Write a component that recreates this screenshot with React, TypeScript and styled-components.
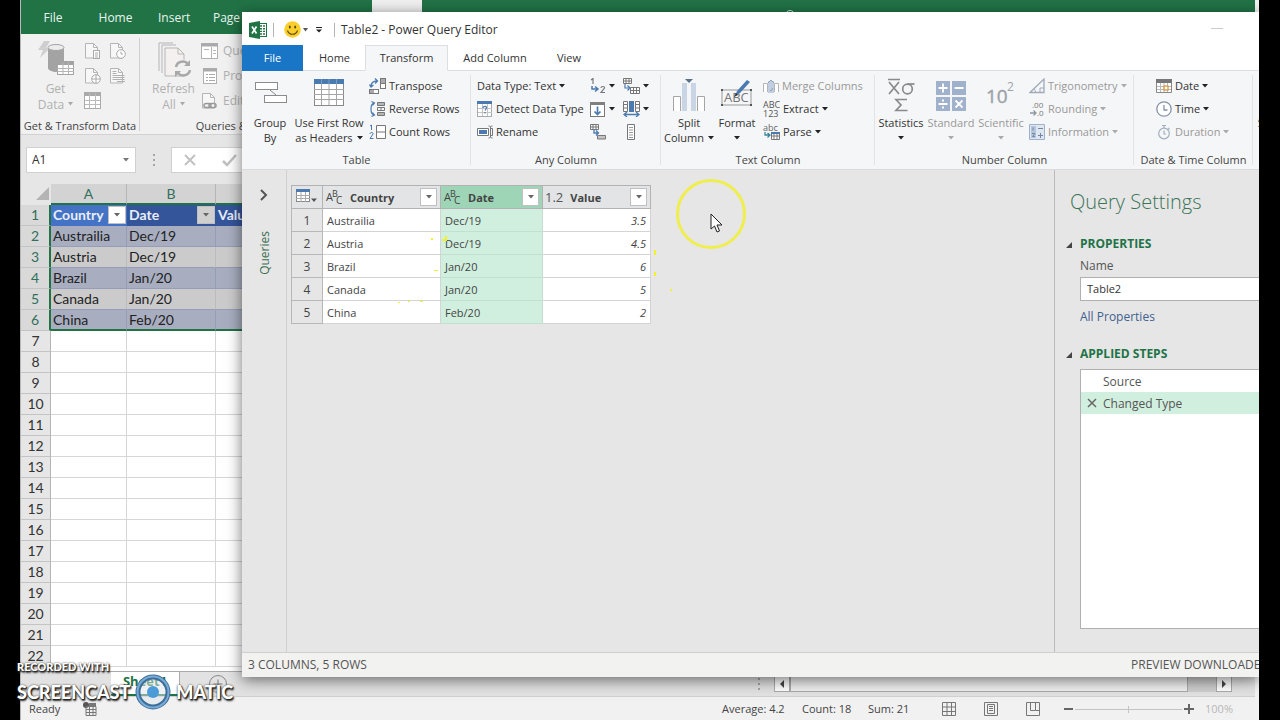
import React from "react";
import styled, { createGlobalStyle, css } from "styled-components";

const ui = `"Open Sans", "Noto Sans", sans-serif`;
const cellFont = `Lato, "Liberation Sans", sans-serif`;

const Global = createGlobalStyle`
  * { box-sizing: border-box; }
  body { margin: 0; background: #000; font-family: ${ui}; color: #333; overflow: hidden; }
  button, input { font-family: inherit; color: inherit; }
  button { background: none; border: 0; padding: 0; margin: 0; white-space: nowrap; }
  svg { display: block; flex: none; }
`;

const Screen = styled.div`
  position: relative;
  height: 100vh;
  min-height: 480px;
  padding: 0 21px 0 20px;
  overflow: hidden;
  background: #000;
`;
const Desktop = styled.div`
  position: relative;
  height: 100%;
  overflow: hidden;
`;

/* ---------- Spreadsheet window ---------- */
const Workbook = styled.div`
  height: 100%;
  display: flex;
  flex-direction: column;
  background: #e6e6e6;
  border-left: 1px solid #b8b8b8;
  border-right: 4px solid #f2f2f2;
`;
const BookTabs = styled.nav`
  flex: none;
  display: flex;
  height: 34px;
  padding-left: 12px;
  background: #217346;
`;
const BookTab = styled.button<{ $w: number; $active?: boolean }>`
  width: ${p => p.$w}px;
  font-size: 12px;
  color: ${p => (p.$active ? "#217346" : "#e9f5ee")};
  background: ${p => (p.$active ? "#f1f1f1" : "none")};
  margin-left: ${p => (p.$active ? 67 : 0)}px;
`;
const TellMe = styled.div`
  margin: 9px 0 0 362px;
`;
const BookRibbon = styled.div`
  flex: none;
  display: flex;
  height: 101px;
  background: #f1f1f1;
  border-bottom: 1px solid #d2d2d2;
`;
const BookGroup = styled.section<{ $w: number }>`
  width: ${p => p.$w}px;
  display: flex;
  flex-direction: column;
  margin: 4px 0 3px;
  border-right: 1px solid #cfcfcf;
`;
const BookGroupBody = styled.div`
  flex: 1;
  display: flex;
  color: #b0b0b0;
`;
const BookGroupLabel = styled.div`
  height: 10px;
  font-size: 11px;
  line-height: 10px;
  text-align: center;
  white-space: nowrap;
  color: #444;
`;
const BookLarge = styled.button<{ $w: number }>`
  width: ${p => p.$w}px;
  display: flex;
  flex-direction: column;
  align-items: center;
  padding: 3px 0 0 6px;
  font-size: 12px;
  line-height: 17px;
  color: #b0b0b0;
  svg { margin-bottom: 2px; }
`;
const BookIcons = styled.div`
  display: grid;
  grid-template-columns: 25px 25px;
  grid-auto-rows: 25px;
  align-items: center;
`;
const BookSmall = styled.button`
  display: flex;
  align-items: center;
  gap: 5px;
  height: 25px;
  font-size: 12px;
  color: #b0b0b0;
`;
const FormulaBar = styled.div`
  flex: none;
  display: flex;
  align-items: center;
  height: 49px;
  padding-left: 5px;
`;
const NameBox = styled.div`
  display: flex;
  align-items: center;
  width: 110px;
  height: 26px;
  background: #fff;
  border: 1px solid #d0d0d0;
  input { width: 96px; border: 0; padding: 0 5px; font-size: 12px; background: none; outline: 0; }
`;
const Dots = styled.div`
  display: flex;
  flex-direction: column;
  gap: 3px;
  width: 35px;
  align-items: center;
  i { width: 2px; height: 2px; background: #a6a6a6; }
`;
const FormulaBox = styled.div`
  flex: 1;
  display: flex;
  align-items: center;
  gap: 24px;
  height: 26px;
  padding-left: 10px;
  background: #fff;
  border: 1px solid #d0d0d0;
`;
const SheetArea = styled.div`
  flex: 1;
  min-height: 0;
  overflow: hidden;
  background: #fff;
`;
const Sheet = styled.table`
  width: 100%;
  table-layout: fixed;
  border-collapse: separate;
  border-spacing: 0;
  font-family: ${cellFont};
  font-size: 14px;
`;
const ColHead = styled.th<{ $sel?: boolean }>`
  height: 21px;
  padding: 0;
  font-weight: 400;
  color: ${p => (p.$sel ? "#31705a" : "#444")};
  background: ${p => (p.$sel ? "#d3d3d3" : "#e6e6e6")};
  border-right: 1px solid #b5b5b5;
  border-bottom: 2px solid ${p => (p.$sel ? "#217346" : "#b5b5b5")};
`;
const Corner = styled.th`
  height: 21px;
  padding: 0 2px 2px 0;
  background: #e6e6e6;
  svg { margin-left: auto; }
`;
const RowHead = styled.th<{ $sel?: boolean }>`
  height: 21px;
  padding: 0;
  line-height: 18px;
  font-weight: 400;
  color: ${p => (p.$sel ? "#31705a" : "#333")};
  background: ${p => (p.$sel ? "#d9d9d9" : "#e6e6e6")};
  border-right: ${p => (p.$sel ? "2px solid #217346" : "1px solid #b5b5b5")};
  border-bottom: 1px solid #c4c4c4;
`;
const Cell = styled.td<{ $kind?: "head" | "band" | "plain" | "last" }>`
  height: 21px;
  padding: 0 0 0 2px;
  line-height: 20px;
  color: #222;
  white-space: nowrap;
  overflow: hidden;
  border-right: 1px solid #d6d6d6;
  border-bottom: 1px solid #d6d6d6;
  ${p => p.$kind === "head" && css`
    background: #35559b; color: #e8edf8; font-weight: 700; border-color: #35559b;
    &:nth-child(2) { background: #4472c4; border-color: #4472c4; }
  `}
  ${p => (p.$kind === "band" || p.$kind === "last") && css`background: #a8aec0; border-color: #959db8;`}
  ${p => p.$kind === "plain" && css`background: #cbcbcb; border-right-color: #bcbcbc; border-bottom-color: #959db8;`}
  ${p => p.$kind === "last" && css`border-bottom: 2px solid #217346; line-height: 19px;`}
`;
const HeadCell = styled.div`
  display: flex;
  justify-content: space-between;
  align-items: center;
`;
const BookFilter = styled.button<{ $on?: boolean }>`
  width: 18px;
  height: 18px;
  display: grid;
  place-items: center;
  background: ${p => (p.$on ? "#fff" : "#d0d0d0")};
  border: 1px solid #c0c0c0;
`;
const SheetBar = styled.div`
  flex: none;
  display: flex;
  height: 26px;
  background: #e2e2e2;
  border-top: 1px solid #ababab;
  border-bottom: 1px solid #d0d0d0;
`;
const SheetTab = styled.button`
  margin-left: 90px;
  width: 69px;
  padding-bottom: 4px;
  background: #fff;
  border-bottom: 2px solid #217346;
  border-right: 1px solid #ababab;
  font-size: 13px;
  line-height: 18px;
  font-weight: 700;
  color: #217346;
`;
const AddSheet = styled.button`
  margin: 2px auto 0 28px;
  align-self: flex-start;
`;
const ScrollBar = styled.div`
  display: flex;
  height: 20px;
  width: 458px;
  margin-right: 23px;
  background: #cfcfcf;
`;
const ScrollButton = styled.button`
  width: 16px;
  display: grid;
  place-items: end center;
  padding-bottom: 3px;
  background: #fff;
  border: 1px solid #ababab;
`;
const ScrollThumb = styled.div`
  width: 398px;
  margin-right: auto;
  background: #f0f0f0;
  border: 1px solid #ababab;
`;
const ScrollDots = styled(Dots)`
  width: 30px;
  padding-top: 6px;
`;
const BookStatus = styled.footer`
  flex: none;
  display: flex;
  align-items: center;
  height: 23px;
  padding: 0 22px 0 8px;
  background: #f1f1f1;
  font-size: 11px;
  color: #444;
`;
const StatusText = styled.span<{ $w?: number; $dim?: boolean }>`
  width: ${p => (p.$w ? p.$w + "px" : "auto")};
  color: ${p => (p.$dim ? "#b8b8b8" : "#444")};
  white-space: nowrap;
`;
const StatusRight = styled.div`
  display: flex;
  align-items: center;
  margin-left: auto;
`;
const Views = styled.div`
  display: flex;
  gap: 26px;
  margin-right: 23px;
`;
const Zoom = styled.div`
  display: flex;
  align-items: center;
  gap: 2px;
  margin-right: 11px;
`;

/* ---------- Query editor window ---------- */
const Editor = styled.div`
  position: absolute;
  left: 222px;
  right: 0;
  top: 12px;
  bottom: 43px;
  display: flex;
  flex-direction: column;
  background: #e6e6e6;
  box-shadow: 0 3px 14px rgba(0, 0, 0, 0.55);
  overflow: hidden;
`;
const TitleBar = styled.header`
  flex: none;
  display: flex;
  align-items: center;
  height: 33px;
  padding: 2px 36px 0 7px;
  background: #fff;
  font-size: 12px;
  color: #333;
`;
const TitleRule = styled.span<{ $l: number; $r: number }>`
  width: 1px;
  height: 14px;
  background: #b4b4b4;
  margin: 0 ${p => p.$r}px 0 ${p => p.$l}px;
`;
const TitleButton = styled.button`
  display: flex;
  align-items: center;
  gap: 2px;
  margin-right: 8px;
`;
const Minimize = styled.button`
  margin-left: auto;
  width: 12px;
  height: 3px;
  border-top: 1px solid #ccc;
`;
const Tabs = styled.nav`
  flex: none;
  display: flex;
  height: 26px;
  background: #fff;
  border-bottom: 1px solid #dcdfe2;
`;
const Tab = styled.button<{ $w: number; $state?: "file" | "active" }>`
  width: ${p => p.$w}px;
  height: 26px;
  padding-bottom: 2px;
  font-size: 11px;
  ${p => p.$state === "file" && css`background: #1975c6; color: #fff; margin-right: 1px;`}
  ${p => p.$state === "active" && css`
    background: #f5f6f7; border: 1px solid #dcdfe2; border-bottom-color: #f5f6f7;
  `}
`;
const Ribbon = styled.div`
  flex: none;
  display: flex;
  height: 99px;
  background: #f5f6f7;
  border-bottom: 1px solid #dadbdc;
  overflow: hidden;
`;
const Group = styled.section<{ $w: number }>`
  flex: none;
  width: ${p => p.$w}px;
  display: flex;
  flex-direction: column;
  padding-top: 3px;
  background: linear-gradient(#e2e3e4, #e2e3e4) right 4px / 1px 90px no-repeat;
`;
const GroupBody = styled.div<{ $pad: number }>`
  flex: 1;
  display: flex;
  padding-left: ${p => p.$pad}px;
`;
const GroupLabel = styled.div`
  height: 17px;
  font-size: 11px;
  line-height: 16px;
  text-align: center;
  white-space: nowrap;
  color: #444;
`;
const Large = styled.button<{ $w: number; $off?: boolean }>`
  flex: none;
  width: ${p => p.$w}px;
  display: flex;
  flex-direction: column;
  align-items: center;
  padding-top: 4px;
  font-size: 11px;
  line-height: 15px;
  color: ${p => (p.$off ? "#999" : "#333")};
`;
const LargeIcon = styled.span`
  height: 37px;
`;
const LargeLine = styled.span`
  display: flex;
  align-items: center;
  justify-content: center;
  gap: 4px;
  height: 15px;
`;
const Stack = styled.div<{ $w?: number; $l?: number }>`
  flex: none;
  width: ${p => (p.$w ? p.$w + "px" : "auto")};
  margin-left: ${p => p.$l || 0}px;
`;
const Small = styled.button<{ $off?: boolean }>`
  display: flex;
  align-items: center;
  gap: 3px;
  height: 23px;
  font-size: 11px;
  color: ${p => (p.$off ? "#999" : "#333")};
`;
const Body = styled.div`
  flex: 1;
  min-height: 0;
  display: flex;
`;
const QueriesPane = styled.aside`
  flex: none;
  display: flex;
  flex-direction: column;
  align-items: center;
  width: 45px;
  padding-top: 19px;
  border-right: 1px solid #d0d0d0;
`;
const QueriesLabel = styled.span`
  margin-top: 30px;
  writing-mode: vertical-rl;
  transform: rotate(180deg);
  font-size: 12px;
  color: #3b6e53;
`;
const Preview = styled.main`
  flex: 1;
  min-width: 0;
  padding: 15px 0 0 4px;
`;
const Data = styled.table`
  width: 359px;
  table-layout: fixed;
  border-collapse: collapse;
  background: #fff;
  font-size: 11px;
  color: #444;
`;
const DataHead = styled.th<{ $sel?: boolean }>`
  height: 23px;
  padding: 0 3px 0 2px;
  background: ${p => (p.$sel ? "#9fd5b7" : "#e3e4e5")};
  border: 1px solid #b2b2b2;
`;
const DataHeadRow = styled.div`
  display: flex;
  align-items: center;
  gap: 7px;
`;
const TypeButton = styled.button`
  font-size: 13px;
  line-height: 18px;
  color: #555;
`;
const DataFilter = styled.button`
  width: 17px;
  height: 18px;
  margin-left: auto;
  display: grid;
  place-items: center;
  background: #fff;
  border: 1px solid #c0c0c0;
`;
const DataIndex = styled.th`
  height: 23px;
  padding: 0;
  font-weight: 400;
  font-size: 12px;
  background: #e6e6e6;
  border: 1px solid #b8b8b8;
`;
const DataCell = styled.td<{ $sel?: boolean; $num?: boolean }>`
  height: 23px;
  padding: 0 4px;
  border: 1px solid ${p => (p.$sel ? "#c3dfcf" : "#d4d4d4")};
  background: ${p => (p.$sel ? "#d1efdf" : "#fff")};
  text-align: ${p => (p.$num ? "right" : "left")};
  font-style: ${p => (p.$num ? "italic" : "normal")};
`;
const Settings = styled.aside`
  flex: none;
  display: flex;
  flex-direction: column;
  width: 205px;
  padding: 18px 0 23px 15px;
  border-left: 1px solid #bcbcbc;
  overflow: hidden;
`;
const SettingsTitle = styled.h1`
  margin: 0 0 14px;
  font-size: 20px;
  line-height: 28px;
  font-weight: 300;
  color: #3c7558;
`;
const SettingsHead = styled.h2`
  display: flex;
  align-items: center;
  gap: 7px;
  margin: 0 0 0 -4px;
  font-size: 12px;
  line-height: 28px;
  font-weight: 700;
  color: #217346;
`;
const Section = styled.div`
  padding-left: 10px;
  font-size: 12px;
`;
const NameField = styled.label`
  display: block;
  line-height: 16px;
  color: #555;
  input {
    display: block;
    width: 100%;
    height: 24px;
    margin: 3px 0 0;
    padding: 0 6px 2px;
    border: 1px solid #b0b0b0;
    border-right: 0;
    background: #fff;
    font-size: 11px;
    color: #333;
  }
`;
const AllLink = styled.a`
  display: block;
  margin: 8px 0 15px;
  line-height: 16px;
  color: #41618f;
  text-decoration: none;
`;
const Steps = styled.ul`
  flex: 1;
  margin: 1px 0 0 10px;
  padding: 0;
  list-style: none;
  background: #fff;
  border: 1px solid #b0b0b0;
  border-right: 0;
`;
const Step = styled.li<{ $sel?: boolean }>`
  display: grid;
  grid-template-columns: 10px 1fr;
  gap: 6px;
  align-items: center;
  height: 22px;
  padding-left: 6px;
  font-size: 12px;
  color: #555;
  background: ${p => (p.$sel ? "#d1efdf" : "none")};
`;
const EditorStatus = styled.footer`
  flex: none;
  display: flex;
  justify-content: space-between;
  align-items: center;
  height: 25px;
  padding: 0 0 2px 6px;
  background: #f2f2f0;
  border-top: 1px solid #cfcfcf;
  font-size: 12px;
  color: #555;
`;
const Clipped = styled.span`
  width: 128px;
  overflow: hidden;
  white-space: nowrap;
`;

/* ---------- Overlays ---------- */
const Pointer = styled.div`
  position: absolute;
  left: 673px;
  top: 176px;
`;
const Specks = styled.div`
  position: absolute;
  left: 390px;
  top: 230px;
`;
const Watermark = styled.div`
  position: absolute;
  left: 17px;
  bottom: 9px;
  color: #fff;
  font-family: ${cellFont};
  font-weight: 900;
  text-shadow: 1px 1px 1px #222, 0 0 2px #333, 1px 2px 2px #333;
`;
const MarkTop = styled.div`
  font-size: 11px;
  line-height: 12px;
`;
const MarkRow = styled.div`
  display: flex;
  align-items: center;
  gap: 4px;
  font-size: 18px;
  line-height: 38px;
`;

/* ---------- Icons ---------- */
const Svg = ({ w = 16, h = 16, children }: { w?: number; h?: number; children: React.ReactNode }) => (
  <svg width={w} height={h} viewBox={`0 0 ${w} ${h}`} fill="none" aria-hidden="true">{children}</svg>
);
const Caret = ({ c = "#222", s = 6 }: { c?: string; s?: number }) => (
  <Svg w={s} h={4}><path d={`M0 0H${s}L${s / 2} 3.4Z`} fill={c} /></Svg>
);
const B = "#4a7ab0";
const G = "#777";

const GetDataIcon = () => (
  <Svg w={38} h={37}>
    <path d="M7 0h6l-4 7h4L3 17l3-8H1z" fill="#cfcfcf" />
    <path d="M11 7v20c0 2 4 4 9 4V24h7V7z" fill="#a3a3a3" />
    <ellipse cx="19" cy="6.500" rx="8" ry="3" fill="#ececec" stroke="#a3a3a3" />
    <rect x="20.500" y="20.500" width="16" height="13" fill="#fff" stroke="#a3a3a3" />
    <path d="M20 21h17v3H20z" fill="#a3a3a3" /><path d="M26 21v12M31.500 21v12M20 27.500h17M20 30.500h17" stroke="#b5b5b5" />
  </Svg>
);
const RefreshIcon = () => (
  <Svg w={34} h={37}>
    <path d="M2 30V2h14M5 32V4h14" stroke="#b5b5b5" />
    <path d="M8 7h13l6 6v22H8z" fill="#f5f0f0" stroke="#b5b5b5" /><path d="M21 7v6h6" stroke="#b5b5b5" />
    <circle cx="26" cy="27" r="8.500" fill="#f1f1f1" />
    <path d="M19 26c1-6 9-7 12-3M33 29c-1 6-9 7-12 3" stroke="#a8a8a8" strokeWidth="2.400" />
    <path d="M33 19v6h-6zM18 36v-6h6z" fill="#a8a8a8" />
  </Svg>
);
const PageIcon = ({ badge }: { badge: "doc" | "clock" | "globe" | "lines" | "link" }) => (
  <Svg w={17} h={17}>
    <path d="M1.500 16V1.500h8l4 4V16z" fill="#f7f7f7" stroke="#b5b5b5" /><path d="M9.500 1.500v4h4" stroke="#b5b5b5" />
    {badge === "doc" && <><rect x="9.500" y="8.500" width="6" height="8" fill="#fff" stroke="#aaa" /><path d="M11 11h3M11 13h3M11 15h3" stroke="#aaa" /></>}
    {badge === "clock" && <><circle cx="12" cy="12" r="4.300" fill="#fff" stroke="#aaa" /><path d="M12 9.500V12h2" stroke="#aaa" /></>}
    {badge === "globe" && <><circle cx="12" cy="12" r="4.300" fill="#fff" stroke="#aaa" /><path d="M12 8v8M8 12h8" stroke="#aaa" /></>}
    {badge === "lines" && <path d="M3.500 4.500h4M3.500 6.500h4M3.500 8.500h12M3.500 10.500h12M3.500 12.500h12M8 14.500h8" stroke="#b0b0b0" />}
    {badge === "link" && <><rect x="3" y="11.500" width="7" height="4" rx="2" fill="#f1f1f1" stroke="#999" strokeWidth="1.500" /><rect x="8" y="11.500" width="7" height="4" rx="2" stroke="#999" strokeWidth="1.500" /></>}
  </Svg>
);
const GrayTable = () => (
  <Svg w={17} h={17}><rect x=".5" y=".5" width="16" height="16" fill="#fff" stroke="#aaa" /><path d="M0 1h17v3H0z" fill="#aaa" /><path d="M5.500 1v15M11.500 1v15M1 8.500h15M1 12.500h15" stroke="#bbb" /></Svg>
);
const PaneIcon = ({ list }: { list?: boolean }) => (
  <Svg w={17} h={16}>
    <rect x={list ? 2.5 : 0.5} y=".5" width={list ? 13 : 16} height="15" fill="#fff" stroke="#b0b0b0" />
    <path d={list ? "M2 2h14" : "M0 2h17"} stroke="#aaa" strokeWidth="3" />
    {list ? <path d="M5 6.500h2M5 9.500h2M5 12.500h2M8 6.500h6M8 9.500h6M8 12.500h6" stroke="#aaa" /> : <path d="M10.500 4v11M12 7.500h3M12 10.500h3M3 6.500h5" stroke="#b5b5b5" />}
  </Svg>
);

const ExcelLogo = () => (
  <Svg w={18} h={18}>
    <rect x="9" y="2.500" width="8.500" height="13" fill="#fff" stroke="#217346" />
    <path d="M11 5h2M14 5h2M11 7.700h2M14 7.700h2M11 10.400h2M14 10.400h2M11 13h2M14 13h2" stroke="#217346" strokeWidth="1.400" />
    <path d="M0 2l11-2v18L0 16z" fill="#217346" /><path d="M3 5.500l4.500 7M7.500 5.500l-4.500 7" stroke="#fff" strokeWidth="1.700" />
  </Svg>
);
const Smiley = () => (
  <Svg w={17} h={17}>
    <circle cx="8.500" cy="8.500" r="8.300" fill="#fbcf2b" /><ellipse cx="5.800" cy="6" rx="1" ry="1.600" fill="#5b4a10" /><ellipse cx="11.200" cy="6" rx="1" ry="1.600" fill="#5b4a10" />
    <path d="M3.500 9.500c1.500 5 8.500 5 10 0" stroke="#5b4a10" strokeWidth="1.100" />
  </Svg>
);
const GroupByIcon = () => (
  <Svg w={33} h={28}>
    <path d="M16 12l6 5" stroke="#888" /><rect x="1.500" y="4.500" width="22" height="7" fill="#fff" stroke="#8c8c8c" /><rect x="10.500" y="17.500" width="22" height="7" fill="#fff" stroke="#8c8c8c" />
  </Svg>
);
const HeadersIcon = () => (
  <Svg w={30} h={29}>
    <rect x=".5" y="1.500" width="29" height="26" fill="#fff" stroke="#8a8a8a" /><path d="M0 1h30v5H0z" fill={B} />
    <path d="M7.500 6v21M15 6v21M22.500 6v21M0 11.500h30M0 16.500h30M0 21.500h30" stroke="#a5a5a5" />
    <path d="M7.500 1v5M15 1v5M22.500 1v5" stroke="#7a9cc4" />
  </Svg>
);
const TransposeIcon = () => (
  <Svg w={17}><rect x="11.500" y=".5" width="5" height="10" fill="#fff" stroke={G} /><path d="M12 1h4v4h-4z" fill="#aaa" /><path d="M11 5.500h5" stroke={G} /><rect x=".5" y="11.500" width="9" height="4" fill="#fff" stroke={G} /><path d="M1 12h4v3H1z" fill="#aaa" /><path d="M2 9c0-4 2-6 6-6M6 .5L8.500 3 6 5.500M.5 6.500L2 9l2.500-2" stroke={B} strokeWidth="1.300" /></Svg>
);
const ReverseIcon = () => (
  <Svg w={17}><path d="M8.500 1.500h7v3h-7zM8.500 11.500h7v3h-7z" fill="#b5b5b5" stroke={G} /><path d="M8.500 6.500h7v3h-7zM12 6v4" stroke={G} /><path d="M5 2C1 3 1 13 5 14M2.500.5L5.500 2 3.500 4.500M3.500 11.500l2 2.500-3 1.500" stroke={B} strokeWidth="1.200" /></Svg>
);
const CountIcon = () => (
  <Svg w={17}><path d="M7.500 1.500h9v13h-9zM7 8h9" fill="#fff" stroke={G} /><path d="M1 2l1.500-1v5M1 10c0-2 3.500-2 3 0L1 14.500h3.500" stroke={B} /></Svg>
);
const DetectIcon = () => (
  <Svg><rect x=".5" y=".5" width="14" height="15" fill="#fff" stroke="#aaa" /><path d="M0 0h15v3H0z" fill={B} /><path d="M5.500 3v12M10.500 3v12M1 7.500h14M1 11.500h14" stroke="#c3c3c3" /><path d="M6 7c0-2.500 4-2 3.500 0L8 9.500M8 11v1.500" stroke={B} strokeWidth="1.200" /></Svg>
);
const RenameIcon = () => (
  <Svg><path d="M.5 4.500h11v7H.5z" fill="#fff" stroke={G} /><path d="M2 6h8v4H2z" fill={B} /><path d="M13.500 3v10M11.500 2c1 0 2 .5 2 1 0-.500 1-1 2-1M11.500 14c1 0 2-.500 2-1 0 .5 1 1 2 1M13 4.500h2.500v7H13" stroke={G} /></Svg>
);
const ReplaceIcon = () => (
  <Svg><path d="M1 2l2-1.500V6M11 10c0-2 4-2 3.500 0L11 14.500h4" stroke={G} strokeWidth="1.200" /><path d="M2 8v3h5M5 8.500L8 11l-3 2.500" stroke={B} strokeWidth="1.500" /></Svg>
);
const FillIcon = () => (
  <Svg><rect x=".5" y="1.500" width="14" height="14" fill="#fff" stroke={G} /><path d="M0 1h15v3H0z" fill="#808080" /><path d="M7.500 5.500v8M4.500 10.500l3 3 3-3" stroke={B} strokeWidth="1.700" /></Svg>
);
const PivotIcon = () => (
  <Svg w={17}><path d="M.5.5h8v5h-8zM.5 3h8M3 .5v5M6 .5v5M7.500 9.500h9v6h-9zM7.500 12.500h9M10.500 9.500v6M13.500 9.500v6" fill="#fff" stroke={G} /><path d="M2 6v4h4M4.500 7.500L7 10l-2.500 2.500" stroke={B} strokeWidth="1.200" /></Svg>
);
const MoveIcon = () => (
  <Svg w={17}><path d="M.5.500h4v10h-4zM12.500.500h4v10h-4zM.5 3.500h4M.5 7h4M12.500 3.500h4M12.500 7h4" fill="#fff" stroke={G} /><path d="M6 0h5v11H6z" fill={B} /><path d="M1 13.500h15M4 11l-3 2.500L4 16M13 11l3 2.500-3 2.500" stroke={B} strokeWidth="1.300" /></Svg>
);
const UnpivotIcon = () => (
  <Svg><path d="M.5.5h8v5h-8zM.5 3h8M3 .5v5M6 .5v5" fill="#fff" stroke={G} /><path d="M7.500 11.500h8v3.500h-8z" fill="#c5c5c5" stroke={G} /><path d="M4 5v4h4M6 6.500L8.500 9 6 11.500" stroke={B} strokeWidth="1.300" /></Svg>
);
const ListIcon = () => (
  <Svg><path d="M4.500.5h7v15h-7z" fill="#fff" stroke={G} /><path d="M6 3.500h4M6 6h4M6 8.500h4M6 11h4M6 13.500h4" stroke="#999" /></Svg>
);
const SplitIcon = () => (
  <Svg w={34} h={34}><path d="M1.500 33V18.500h7V33M25.500 33V18.500h7V33" fill="#fff" stroke="#a5a5a5" /><path d="M10 5h5v28h-5zM19 5h5v28h-5z" fill="#c9d5e4" /><path d="M13 1h8l-4 4z" fill="#58718f" /></Svg>
);
const FormatIcon = () => (
  <Svg w={34} h={34}>
    <path d="M2 12h29v15H2z" stroke="#999" /><path d="M1 11h2v2H1zM30 11h2v2h-2zM1 26h2v2H1zM30 26h2v2h-2z" fill="#555" />
    <text x="4" y="24" fontFamily={ui} fontSize="13" fill="#777">ABC</text>
    <path d="M15 18l2-5L27 2l3 2-10 11z" fill={B} /><path d="M14 19l2-4 2 2z" fill="#333" />
  </Svg>
);
const MergeIcon = () => (
  <Svg><path d="M.5 14V5.500h4V14M11.500 14V5.500h4V14" fill="#fff" stroke="#b5b5b5" /><path d="M5 3h6v12H5z" fill="#c2cee0" /><path d="M5 5l3-3 3 3M7 12l1 1 2-3" stroke="#8da3c0" /></Svg>
);
const ExtractIcon = () => (
  <Svg w={17} h={20}>
    <g fontFamily={ui} fontSize="9" fill="#555"><text x="0" y="9">ABC</text><text x="0" y="18">123</text></g>
  </Svg>
);
const ParseIcon = () => (
  <Svg w={17} h={18}><text x="0" y="8" fontFamily={ui} fontSize="9" fill="#666">abc</text><path d="M2 9v3h4M4.500 10L7 12l-2.500 2.500" stroke="#39869a" strokeWidth="1.300" /><path d="M8.500 9.500h8v7h-8zM8.500 13h8M11 10v6M14 10v6" fill="#fff" stroke={G} /><path d="M8 9h9v2H8z" fill={B} /></Svg>
);
const StatsIcon = () => (
  <Svg w={30} h={34}><g stroke="#8a8a8a" strokeWidth="1.700"><path d="M2 1.500h12M3 4l10 12M13 4L3 16" /><circle cx="21.500" cy="11" r="4.800" /><path d="M21.500 6h7" /><path d="M21 21.500H10l5 5.500-5 5.500h11.500" /></g></Svg>
);
const StandardIcon = () => (
  <Svg w={32} h={34}><path d="M1 3h14v14H1zM17 3h14v14H17zM1 19h14v14H1zM17 19h14v14H17z" fill="#9fb1cb" /><path d="M8 5.500v9M3.500 10h9M19.500 10h9M3.500 26h9M20.500 22.500l7 7M27.500 22.500l-7 7" stroke="#fff" strokeWidth="1.800" /><path d="M7 21.500h2v2H7zM7 28.500h2v2H7z" fill="#fff" /></Svg>
);
const ScientificIcon = () => (
  <Svg w={30} h={34}><text x="0" y="25" fontFamily={ui} fontSize="19" fill="#9da2aa" stroke="#9da2aa" strokeWidth=".4">10</text><text x="21" y="13" fontFamily={ui} fontSize="12" fill="#9da2aa">2</text></Svg>
);
const TrigIcon = () => (
  <Svg><path d="M1 14.500L15 1v13.500z" stroke="#a0aab8" strokeWidth="1.300" /><path d="M11 14v-4h4M5 11c1 1 1.500 2 1.500 3" stroke="#a0aab8" /></Svg>
);
const RoundIcon = () => (
  <Svg><text x="3" y="7" fontFamily={ui} fontSize="8" fill="#777">.00</text><text x="8" y="15" fontFamily={ui} fontSize="8" fill="#777">.0</text><path d="M1 12h6M4.500 9.500L7 12l-2.500 2.500" stroke="#8e97a3" strokeWidth="1.300" /></Svg>
);
const InfoIcon = () => (
  <Svg><path d="M.5.500h15v15H.5z" fill="#dfe6ef" stroke="#9fb1cb" /><path d="M2 2h5v12H2z" fill="#b4c5dc" /><path d="M4 3.500v3M3 9.500h3L3.500 12.500H6M9 4.500h5M9 11.500h5M11.500 9v5" stroke="#7388a5" /></Svg>
);
const DateIcon = () => (
  <Svg><path d="M.5 1.500h15v13H.5z" fill="#fff" stroke="#888" /><path d="M0 1h16v4H0z" fill="#777" /><path d="M4.500 5v9M8 5v9M11.500 5v9M1 8.500h14M1 11.500h14" stroke="#bbb" /><rect x="8" y="8" width="4" height="4" fill="#fff" stroke="#d79a3f" strokeWidth="1.300" /></Svg>
);
const TimeIcon = () => (
  <Svg><circle cx="8" cy="8" r="7.200" fill="#fff" stroke="#8494a7" strokeWidth="1.300" /><path d="M8 4v5h3.500" stroke="#8494a7" strokeWidth="1.300" /></Svg>
);
const DurationIcon = () => (
  <Svg><circle cx="8" cy="9.500" r="5.300" stroke="#a5b0bf" strokeWidth="1.200" /><path d="M8 6.500V10h2M6 1.500h4M8 1.500v3M12 4l1.500 1.500" stroke="#a5b0bf" strokeWidth="1.200" /></Svg>
);
const TypeText = () => (
  <Svg w={18} h={16}><g fontFamily={ui} fill="#444"><text x="1" y="12" fontSize="11">A</text><text x="7" y="8" fontSize="9">B</text><text x="11" y="15" fontSize="10">C</text></g></Svg>
);
const TableMenu = () => (
  <Svg w={22} h={14}><rect x=".5" y=".5" width="13" height="12" fill="#fff" stroke="#888" /><path d="M0 0h14v3H0z" fill={B} /><path d="M5 3v10M9.500 3v10M0 6.500h14M0 9.500h14" stroke="#aaa" /><path d="M15 9.500h6l-3 3.500z" fill="#555" /></Svg>
);

/* ---------- Data ---------- */
const rows = [
  ["Austrailia", "Dec/19", "3.5"],
  ["Austria", "Dec/19", "4.5"],
  ["Brazil", "Jan/20", "6"],
  ["Canada", "Jan/20", "5"],
  ["China", "Feb/20", "2"],
];
const emptyRows = Array.from({ length: 16 }, (_, i) => i + 7);

type SmallProps = { icon?: React.ReactNode; text?: string; menu?: boolean; off?: boolean; label?: string };
const SmallButton = ({ icon, text, menu, off, label }: SmallProps) => (
  <Small $off={off} disabled={off} aria-label={text ? undefined : label}>
    {icon}
    {text && <span>{text}</span>}
    {menu && <Caret c={off ? "#aaa" : "#222"} />}
  </Small>
);
type LargeProps = { icon: React.ReactNode; w: number; a: string; b?: string; menu?: boolean; off?: boolean };
const LargeButton = ({ icon, w, a, b, menu, off }: LargeProps) => (
  <Large $w={w} $off={off} disabled={off}>
    <LargeIcon>{icon}</LargeIcon>
    <LargeLine>{a}</LargeLine>
    <LargeLine>{b}{menu && <Caret c={off ? "#aaa" : "#222"} />}</LargeLine>
  </Large>
);

const Spreadsheet = () => (
  <Workbook>
    <BookTabs>
      <BookTab $w={40}>File</BookTab>
      <BookTab $w={85}>Home</BookTab>
      <BookTab $w={31}>Insert</BookTab>
      <BookTab $w={116}>Page Layout</BookTab>
      <BookTab $w={50} $active aria-label="Data" />
      <TellMe><Svg w={12} h={14}><circle cx="6" cy="6" r="4.500" stroke="#cfe5d8" /><path d="M4 12h4" stroke="#cfe5d8" /></Svg></TellMe>
    </BookTabs>
    <BookRibbon>
      <BookGroup $w={119}>
        <BookGroupBody>
          <BookLarge $w={63} disabled><GetDataIcon /><span>Get</span><LargeLine>Data <Caret c="#aaa" s={5} /></LargeLine></BookLarge>
          <BookIcons>
            <PageIcon badge="doc" /><PageIcon badge="clock" />
            <PageIcon badge="globe" /><PageIcon badge="lines" />
            <GrayTable />
          </BookIcons>
        </BookGroupBody>
        <BookGroupLabel>Get &amp; Transform Data</BookGroupLabel>
      </BookGroup>
      <BookGroup $w={230}>
        <BookGroupBody>
          <BookLarge $w={61} disabled><RefreshIcon /><span>Refresh</span><LargeLine>All <Caret c="#aaa" s={5} /></LargeLine></BookLarge>
          <div>
            <BookSmall disabled><PaneIcon />Queries</BookSmall>
            <BookSmall disabled><PaneIcon list />Properties</BookSmall>
            <BookSmall disabled><PageIcon badge="link" />Edit Links</BookSmall>
          </div>
        </BookGroupBody>
        <BookGroupLabel>Queries &amp; Connections</BookGroupLabel>
      </BookGroup>
    </BookRibbon>
    <FormulaBar>
      <NameBox><input aria-label="Name box" defaultValue="A1" /><Caret c="#777" /></NameBox>
      <Dots><i /><i /><i /></Dots>
      <FormulaBox>
        <Svg><path d="M3 3l10 10M13 3L3 13" stroke="#c0c0c0" strokeWidth="1.800" /></Svg>
        <Svg><path d="M1 9l4 4L14 3" stroke="#c0c0c0" strokeWidth="2.500" /></Svg>
      </FormulaBox>
    </FormulaBar>
    <SheetArea>
      <Sheet>
        <colgroup><col style={{ width: 30 }} /><col style={{ width: 76 }} /><col style={{ width: 89 }} /><col /></colgroup>
        <thead>
          <tr>
            <Corner><Svg w={13} h={13}><path d="M13 0v13H0z" fill="#b4b4b4" /></Svg></Corner>
            <ColHead $sel>A</ColHead><ColHead $sel>B</ColHead><ColHead $sel />
          </tr>
        </thead>
        <tbody>
          <tr>
            <RowHead $sel>1</RowHead>
            <Cell $kind="head"><HeadCell>Country<BookFilter $on aria-label="Filter Country"><Caret c="#666" /></BookFilter></HeadCell></Cell>
            <Cell $kind="head"><HeadCell>Date<BookFilter aria-label="Filter Date"><Caret c="#666" /></BookFilter></HeadCell></Cell>
            <Cell $kind="head">Value</Cell>
          </tr>
          {rows.map((r, i) => {
            const kind = i === 4 ? "last" : i % 2 ? "plain" : "band";
            return (
              <tr key={i}>
                <RowHead $sel>{i + 2}</RowHead>
                <Cell $kind={kind}>{r[0]}</Cell><Cell $kind={kind}>{r[1]}</Cell><Cell $kind={kind} />
              </tr>
            );
          })}
          {emptyRows.map(n => <tr key={n}><RowHead>{n}</RowHead><Cell /><Cell /><Cell /></tr>)}
        </tbody>
      </Sheet>
    </SheetArea>
    <SheetBar>
      <SheetTab>Sheet1</SheetTab>
      <AddSheet aria-label="New sheet"><Svg w={20} h={20}><circle cx="10" cy="10" r="8.500" stroke="#888" /><path d="M10 5.500v9M5.500 10h9" stroke="#777" /></Svg></AddSheet>
      <ScrollDots><i /><i /><i /></ScrollDots>
      <ScrollBar>
        <ScrollButton aria-label="Scroll left"><Svg w={6} h={8}><path d="M5 0v8L1 4z" fill="#444" /></Svg></ScrollButton>
        <ScrollThumb />
        <ScrollButton aria-label="Scroll right"><Svg w={6} h={8}><path d="M1 0v8l4-4z" fill="#444" /></Svg></ScrollButton>
      </ScrollBar>
    </SheetBar>
    <BookStatus>
      <StatusText $w={54}>Ready</StatusText>
      <Svg w={14} h={14}><circle cx="3" cy="3" r="3" fill="#555" /><path d="M3 4.500h10v9H3zM3 7.500h10M3 10.500h10M6.500 5v8M10 5v8" stroke="#777" /><path d="M6 1h7v3H6z" fill="#777" /></Svg>
      <StatusRight>
        <StatusText $w={80}>Average: 4.2</StatusText>
        <StatusText $w={66}>Count: 18</StatusText>
        <StatusText $w={73}>Sum: 21</StatusText>
        <Views>
          <Svg><path d="M1.500 1.500h13v13h-13zM1.500 6h13M1.500 10.500h13M6 1.500v13M10.500 1.500v13" stroke="#777" /></Svg>
          <Svg><path d="M1.500 1.500h13v13h-13zM4.500 3.500h7v9h-7zM6 5.500h4M6 7.500h4M6 9.500h4" stroke="#777" /></Svg>
          <Svg><path d="M1.500 1.500h13v13h-13zM5.500 1.500v8h5v-8M10.500 9.500h4" stroke="#777" /></Svg>
        </Views>
        <Zoom>
          <Svg w={9} h={10}><path d="M0 5h9" stroke="#666" strokeWidth="2" /></Svg>
          <Svg w={107} h={10}><path d="M0 5.500h107M53.500 2v7" stroke="#c4c4c4" /></Svg>
          <Svg w={10} h={10}><path d="M0 5h10M5 0v10" stroke="#666" strokeWidth="2" /></Svg>
        </Zoom>
        <StatusText $dim>100%</StatusText>
      </StatusRight>
    </BookStatus>
  </Workbook>
);

const EditorRibbon = () => (
  <Ribbon>
    <Group $w={229}>
      <GroupBody $pad={6}>
        <LargeButton w={44} icon={<GroupByIcon />} a="Group" b="By" />
        <LargeButton w={74} icon={<HeadersIcon />} a="Use First Row" b="as Headers" menu />
        <Stack $l={3}>
          <SmallButton icon={<TransposeIcon />} text="Transpose" />
          <SmallButton icon={<ReverseIcon />} text="Reverse Rows" />
          <SmallButton icon={<CountIcon />} text="Count Rows" />
        </Stack>
      </GroupBody>
      <GroupLabel>Table</GroupLabel>
    </Group>
    <Group $w={190}>
      <GroupBody $pad={6}>
        <Stack $w={113}>
          <SmallButton text="Data Type: Text" menu />
          <SmallButton icon={<DetectIcon />} text="Detect Data Type" />
          <SmallButton icon={<RenameIcon />} text="Rename" />
        </Stack>
        <Stack $w={33}>
          <SmallButton icon={<ReplaceIcon />} menu label="Replace values" />
          <SmallButton icon={<FillIcon />} menu label="Fill" />
          <SmallButton icon={<UnpivotIcon />} label="Pivot column" />
        </Stack>
        <Stack>
          <SmallButton icon={<PivotIcon />} menu label="Unpivot columns" />
          <SmallButton icon={<MoveIcon />} menu label="Move" />
          <SmallButton icon={<ListIcon />} label="Convert to list" />
        </Stack>
      </GroupBody>
      <GroupLabel>Any Column</GroupLabel>
    </Group>
    <Group $w={214}>
      <GroupBody $pad={4}>
        <LargeButton w={48} icon={<SplitIcon />} a="Split" b="Column" menu />
        <LargeButton w={48} icon={<FormatIcon />} a="Format" menu />
        <Stack $l={2}>
          <SmallButton icon={<MergeIcon />} text="Merge Columns" off />
          <SmallButton icon={<ExtractIcon />} text="Extract" menu />
          <SmallButton icon={<ParseIcon />} text="Parse" menu />
        </Stack>
      </GroupBody>
      <GroupLabel>Text Column</GroupLabel>
    </Group>
    <Group $w={259}>
      <GroupBody $pad={1}>
        <LargeButton w={50} icon={<StatsIcon />} a="Statistics" menu />
        <LargeButton w={50} icon={<StandardIcon />} a="Standard" menu off />
        <LargeButton w={50} icon={<ScientificIcon />} a="Scientific" menu off />
        <Stack $l={3}>
          <SmallButton icon={<TrigIcon />} text="Trigonometry" menu off />
          <SmallButton icon={<RoundIcon />} text="Rounding" menu off />
          <SmallButton icon={<InfoIcon />} text="Information" menu off />
        </Stack>
      </GroupBody>
      <GroupLabel>Number Column</GroupLabel>
    </Group>
    <Group $w={119}>
      <GroupBody $pad={22}>
        <Stack>
          <SmallButton icon={<DateIcon />} text="Date" menu />
          <SmallButton icon={<TimeIcon />} text="Time" menu />
          <SmallButton icon={<DurationIcon />} text="Duration" menu off />
        </Stack>
      </GroupBody>
      <GroupLabel>Date &amp; Time Column</GroupLabel>
    </Group>
    <Group $w={40}>
      <GroupBody $pad={3}><LargeButton w={34} icon={null} a="Struct" /></GroupBody>
    </Group>
  </Ribbon>
);

const ArrowHead = () => <Svg w={7} h={7}><path d="M6 1v6H0z" fill="#444" /></Svg>;

const QueryEditor = () => (
  <Editor>
    <TitleBar>
      <ExcelLogo />
      <TitleRule $l={6} $r={10} />
      <TitleButton aria-label="Feedback"><Smiley /><Caret c="#555" s={5} /></TitleButton>
      <TitleButton aria-label="Customize toolbar"><Svg w={6} h={7}><path d="M0 1.500h6" stroke="#222" /><path d="M0 3.500h6L3 6.500z" fill="#222" /></Svg></TitleButton>
      <TitleRule $l={4} $r={6} />
      Table2 - Power Query Editor
      <Minimize aria-label="Minimize" />
    </TitleBar>
    <Tabs>
      <Tab $w={61} $state="file">File</Tab>
      <Tab $w={61}>Home</Tab>
      <Tab $w={83} $state="active">Transform</Tab>
      <Tab $w={94}>Add Column</Tab>
      <Tab $w={54}>View</Tab>
    </Tabs>
    <EditorRibbon />
    <Body>
      <QueriesPane>
        <button aria-label="Expand queries"><Svg w={8} h={12}><path d="M1 1l5 5-5 5" stroke="#555" strokeWidth="2" /></Svg></button>
        <QueriesLabel>Queries</QueriesLabel>
      </QueriesPane>
      <Preview>
        <Data>
          <colgroup><col style={{ width: 31 }} /><col style={{ width: 118 }} /><col style={{ width: 102 }} /><col style={{ width: 108 }} /></colgroup>
          <thead>
            <tr>
              <DataHead><button aria-label="Table menu"><TableMenu /></button></DataHead>
              <DataHead><DataHeadRow><TypeButton aria-label="Text type"><TypeText /></TypeButton>Country<DataFilter aria-label="Filter Country"><Caret c="#666" /></DataFilter></DataHeadRow></DataHead>
              <DataHead $sel><DataHeadRow><TypeButton aria-label="Text type"><TypeText /></TypeButton>Date<DataFilter aria-label="Filter Date"><Caret c="#666" /></DataFilter></DataHeadRow></DataHead>
              <DataHead><DataHeadRow><TypeButton>1.2</TypeButton>Value<DataFilter aria-label="Filter Value"><Caret c="#666" /></DataFilter></DataHeadRow></DataHead>
            </tr>
          </thead>
          <tbody>
            {rows.map((r, i) => (
              <tr key={i}>
                <DataIndex>{i + 1}</DataIndex>
                <DataCell>{r[0]}</DataCell><DataCell $sel>{r[1]}</DataCell><DataCell $num>{r[2]}</DataCell>
              </tr>
            ))}
          </tbody>
        </Data>
      </Preview>
      <Settings>
        <SettingsTitle>Query Settings</SettingsTitle>
        <SettingsHead><ArrowHead />PROPERTIES</SettingsHead>
        <Section>
          <NameField>Name<input defaultValue="Table2" /></NameField>
          <AllLink href="#properties">All Properties</AllLink>
        </Section>
        <SettingsHead><ArrowHead />APPLIED STEPS</SettingsHead>
        <Steps>
          <Step><span />Source</Step>
          <Step $sel><button aria-label="Delete step"><Svg w={10} h={10}><path d="M1 1l8 8M9 1L1 9" stroke="#666" strokeWidth="1.500" /></Svg></button>Changed Type</Step>
        </Steps>
      </Settings>
    </Body>
    <EditorStatus>
      <span>3 COLUMNS, 5 ROWS</span>
      <Clipped>PREVIEW DOWNLOADED</Clipped>
    </EditorStatus>
  </Editor>
);

export default function App() {
  return (
    <Screen>
      <Global />
      <Desktop>
        <Spreadsheet />
        <QueryEditor />
      </Desktop>
      <Specks>
        <Svg w={290} h={80}><path d="M55 6h2v5h-5v-2h3zM41 8h2v2h-2zM264 20h2v5h-2zM264 42h2v4h-2zM280 59h2v2h-2zM44 40h4v1h-4zM8 72h2v1H8zM18 71h2v1h-2zM30 71h3v1h-3z" fill="#f4f02c" /></Svg>
      </Specks>
      <Pointer>
        <Svg w={78} h={78}>
          <circle cx="38" cy="38" r="33.500" stroke="#f0ee4c" strokeWidth="3" />
          <path d="M38 38v15l3.500-3 2.500 6 2.500-1-2.500-6h5z" fill="#fff" stroke="#222" />
        </Svg>
      </Pointer>
      <Watermark>
        <MarkTop>RECORDED WITH</MarkTop>
        <MarkRow>
          SCREENCAST
          <Svg w={38} h={38}><circle cx="19" cy="19" r="15" fill="#dfe6ea" fillOpacity=".5" stroke="#3d6f9c" strokeWidth="5" /><circle cx="19" cy="19" r="15.500" stroke="#79abd4" strokeWidth="2" /><circle cx="19" cy="19" r="6" fill="#4a9bd8" /></Svg>
          MATIC
        </MarkRow>
      </Watermark>
    </Screen>
  );
}
